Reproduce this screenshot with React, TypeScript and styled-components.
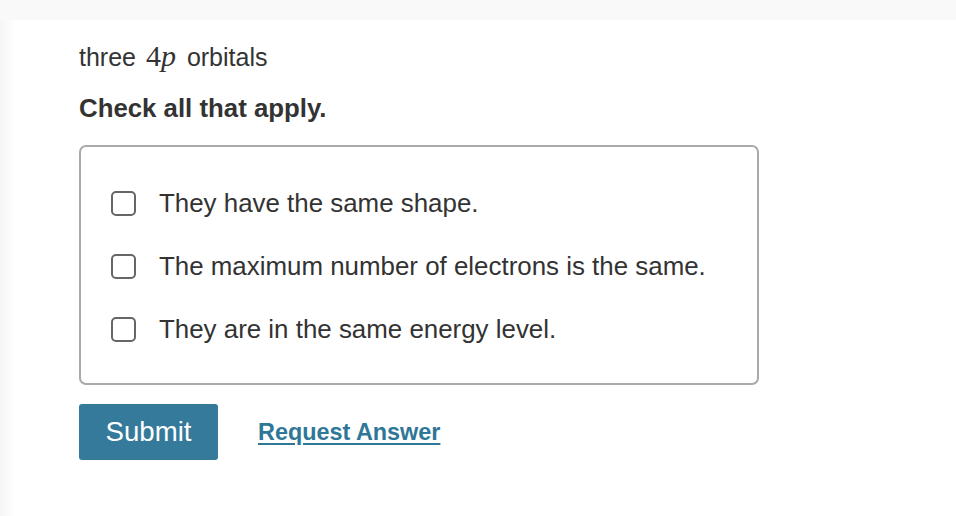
import React from "react";
import styled, { createGlobalStyle } from "styled-components";

const Global = createGlobalStyle`
  html, body { margin: 0; padding: 0; background: #fff; }
  body { font-family: "Liberation Sans", Arial, sans-serif; color: #333; }
`;

const Page = styled.div`
  width: 956px;
  height: 516px;
  display: flex;
  flex-direction: column;
  overflow: hidden;
`;

const TopBar = styled.div`
  height: 20px;
  background: #f9f9f9;
  flex: none;
`;

const Body = styled.div`
  flex: 1;
  display: flex;
`;

const Edge = styled.div`
  width: 13px;
  background: linear-gradient(to right, #f6f6f6, #fdfdfd);
  flex: none;
`;

const Content = styled.div`
  padding: 19px 0 0 66px;
  display: flex;
  flex-direction: column;
`;

const Prompt = styled.div`
  font-size: 25px;
  line-height: 34px;
  color: #333;
`;

const Math = styled.span`
  font-family: "Liberation Serif", "Times New Roman", serif;
  font-size: 30px;
  margin: 0 4px 0 3px;
`;

const Var = styled.i`
  font-style: italic;
`;

const Instruction = styled.div`
  margin-top: 17px;
  font-size: 25.8px;
  line-height: 34px;
  font-weight: bold;
  color: #333;
`;

const Options = styled.div`
  margin-top: 20px;
  width: 680px;
  box-sizing: border-box;
  border: 2px solid #aaa;
  border-radius: 7px;
  padding: 39px 0 37px 30px;
  display: flex;
  flex-direction: column;
  gap: 29px;
`;

const Option = styled.label`
  display: flex;
  align-items: center;
  gap: 23px;
  font-size: 25.9px;
  line-height: 34px;
  color: #333;
`;

const Box = styled.span`
  width: 25px;
  height: 25px;
  box-sizing: border-box;
  border: 2px solid #666;
  border-radius: 5px;
  flex: none;
`;

const Actions = styled.div`
  margin-top: 19px;
  display: flex;
  align-items: center;
  gap: 40px;
`;

const SubmitButton = styled.button`
  width: 139px;
  height: 56px;
  background: #357a9a;
  color: #fff;
  border: none;
  border-radius: 3px;
  font-family: "Liberation Sans", Arial, sans-serif;
  font-size: 27.6px;
  padding: 0;
`;

const Link = styled.a`
  color: #2f7797;
  font-weight: bold;
  font-size: 23.4px;
  text-decoration: underline;
  text-underline-offset: 3px;
  text-decoration-thickness: 2px;
`;

const options = [
  "They have the same shape.",
  "The maximum number of electrons is the same.",
  "They are in the same energy level.",
];

export default function App() {
  return (
    <Page>
      <Global />
      <TopBar />
      <Body>
        <Edge />
        <Content>
          <Prompt>
            three <Math>4<Var>p</Var></Math> orbitals
          </Prompt>
          <Instruction>Check all that apply.</Instruction>
          <Options>
            {options.map((o) => (
              <Option key={o}>
                <Box />
                {o}
              </Option>
            ))}
          </Options>
          <Actions>
            <SubmitButton>Submit</SubmitButton>
            <Link href="#">Request Answer</Link>
          </Actions>
        </Content>
      </Body>
    </Page>
  );
}
